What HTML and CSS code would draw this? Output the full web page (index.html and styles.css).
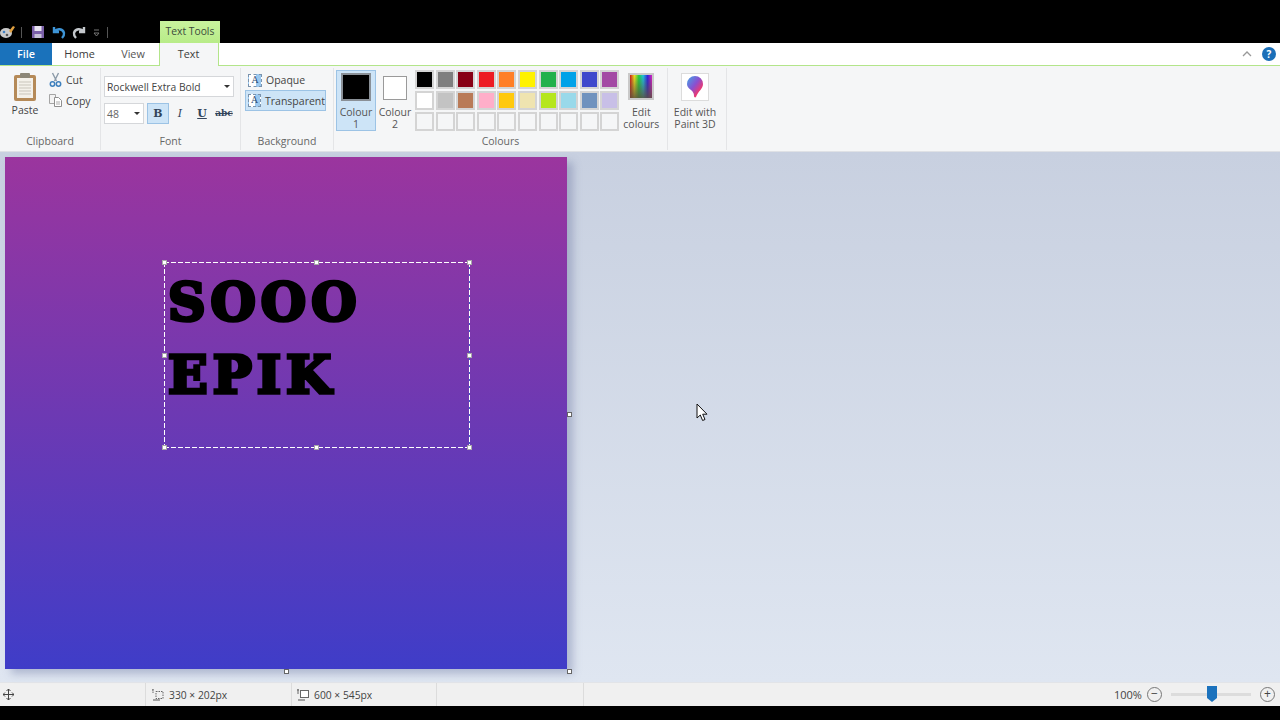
FILE: index.html
```html
<!DOCTYPE html>
<html lang="en">
<head>
    <meta charset="UTF-8">
    <title>Untitled - Paint</title>
    <link rel="stylesheet" href="styles.css">
</head>
<body>

    <div class="titlebar">
        <div class="quick-access">
            <svg class="qa-paint" width="16" height="14" viewBox="0 0 16 14"><ellipse cx="6" cy="8" rx="6" ry="5" fill="#c9c9c9"/><circle cx="4" cy="7" r="1.3" fill="#3f7fc0"/><circle cx="7" cy="10" r="1.3" fill="#555"/><path d="M9 6 13 1l2 1-4 6z" fill="#e0a040"/></svg>
            <span class="qa-sep first"></span>
            <svg class="qa-save" width="14" height="14" viewBox="0 0 14 14"><rect x="1" y="1" width="12" height="12" fill="#7a5fa8"/><rect x="3.500" y="1" width="7" height="5" fill="#e8e4f0"/><rect x="3.500" y="9" width="7" height="4" fill="#c8c2d8"/></svg>
            <svg class="qa-undo" width="14" height="14" viewBox="0 0 14 14"><path d="M2 2v5h5M2.500 6.500C5 3 11 3.500 12 8c.3 2-.5 3.500-2 5" fill="none" stroke="#3d94d6" stroke-width="2.400"/></svg>
            <svg class="qa-redo" width="14" height="14" viewBox="0 0 14 14"><path d="M12 2v5H7M11.500 6.500C9 3 3 3.500 2 8c-.3 2 .5 3.500 2 5" fill="none" stroke="#c4c8cc" stroke-width="2.400"/></svg>
            <svg class="qa-more" width="7" height="8" viewBox="0 0 7 8"><path d="M1 1h5M1 4h5l-2.500 3z" fill="none" stroke="#777" stroke-width="1"/></svg>
            <span class="qa-sep"></span>
        </div>
        <div class="context-tab">Text Tools</div>
    </div>

    <div class="tabs">
        <div class="tab file-tab">File</div>
        <div class="tab home-tab">Home</div>
        <div class="tab view-tab">View</div>
        <div class="tab text-tab">Text</div>
        <div class="tabs-right">
            <svg width="10" height="6" viewBox="0 0 10 6"><path d="M1 5 5 1l4 4" fill="none" stroke="#999" stroke-width="1.300"/></svg>
            <div class="help">?</div>
        </div>
    </div>

    <div class="ribbon">
        <div class="group clipboard">
            <div class="group-body clip-body">
                <div class="paste">
                    <svg width="24" height="30" viewBox="0 0 24 30"><rect x="1" y="3" width="22" height="26" rx="2" fill="#b58a58"/><rect x="4" y="6" width="16" height="20" fill="#f4f1ea"/><path d="M6 10h12M6 13h12M6 16h12M6 19h12M6 22h12" stroke="#c9c5bb"/><rect x="7" y="1" width="10" height="5" rx="1" fill="#8c8778"/></svg>
                    <span>Paste</span>
                </div>
                <div class="clip-list">
                    <div class="clip-item">
                        <svg width="12" height="15" viewBox="0 0 12 15"><path d="M3 1l4 8M9 1 5 9" stroke="#8b9aa8" stroke-width="1.400" fill="none"/><circle cx="3" cy="12" r="2.200" fill="none" stroke="#3f80bd" stroke-width="1.500"/><circle cx="9" cy="12" r="2.200" fill="none" stroke="#3f80bd" stroke-width="1.500"/></svg>
                        <span>Cut</span>
                    </div>
                    <div class="clip-item">
                        <svg width="15" height="15" viewBox="0 0 15 15"><path d="M1.500 1.500h6v9h-6z" fill="#f3f3f3" stroke="#a5a5a5"/><path d="M6.500 4.500h4l3 3v6h-7z" fill="#fff" stroke="#8f8f8f"/><path d="M8 9h4M8 11h4" stroke="#aaa"/></svg>
                        <span>Copy</span>
                    </div>
                </div>
            </div>
            <div class="group-label">Clipboard</div>
        </div>

        <div class="group font">
            <div class="group-body font-body">
                <div class="select font-name">Rockwell Extra Bold<i class="caret"></i></div>
                <div class="font-row">
                    <div class="select font-size">48<i class="caret"></i></div>
                    <div class="fmt fmt-b">B</div>
                    <div class="fmt fmt-i">I</div>
                    <div class="fmt fmt-u">U</div>
                    <div class="fmt fmt-s">abc</div>
                </div>
            </div>
            <div class="group-label">Font</div>
        </div>

        <div class="group background">
            <div class="group-body bg-body">
                <div class="bg-item">
                    <span class="bg-icon">A</span>
                    <span>Opaque</span>
                </div>
                <div class="bg-item selected">
                    <span class="bg-icon">A</span>
                    <span>Transparent</span>
                </div>
            </div>
            <div class="group-label">Background</div>
        </div>

        <div class="group colours">
            <div class="group-body colours-body">
                <div class="colour-btn active">
                    <span class="big-swatch"></span>
                    <span>Colour<br>1</span>
                </div>
                <div class="colour-btn second">
                    <span class="mid-swatch"></span>
                    <span>Colour<br>2</span>
                </div>
                <div class="palette">
                    <span class="swatch c-black"></span>
                    <span class="swatch c-grey"></span>
                    <span class="swatch c-maroon"></span>
                    <span class="swatch c-red"></span>
                    <span class="swatch c-orange"></span>
                    <span class="swatch c-yellow"></span>
                    <span class="swatch c-green"></span>
                    <span class="swatch c-sky"></span>
                    <span class="swatch c-indigo"></span>
                    <span class="swatch c-purple"></span>
                    <span class="swatch c-white"></span>
                    <span class="swatch c-silver"></span>
                    <span class="swatch c-brown"></span>
                    <span class="swatch c-pink"></span>
                    <span class="swatch c-gold"></span>
                    <span class="swatch c-cream"></span>
                    <span class="swatch c-lime"></span>
                    <span class="swatch c-ice"></span>
                    <span class="swatch c-steel"></span>
                    <span class="swatch c-lilac"></span>
                    <span class="swatch"></span>
                    <span class="swatch"></span>
                    <span class="swatch"></span>
                    <span class="swatch"></span>
                    <span class="swatch"></span>
                    <span class="swatch"></span>
                    <span class="swatch"></span>
                    <span class="swatch"></span>
                    <span class="swatch"></span>
                    <span class="swatch"></span>
                </div>
                <div class="edit-colours">
                    <span class="rainbow"></span>
                    <span>Edit<br>colours</span>
                </div>
            </div>
            <div class="group-label">Colours</div>
        </div>

        <div class="group paint3d">
            <div class="p3d-btn">
                <span class="p3d-icon">
                    <svg width="18" height="24" viewBox="0 0 18 24">
                        <defs><linearGradient id="drop" x1="0" y1="0" x2="1" y2="1"><stop offset="0" stop-color="#3fa8e8"/><stop offset=".45" stop-color="#8a4fd0"/><stop offset=".75" stop-color="#f0386e"/><stop offset="1" stop-color="#f6a030"/></linearGradient></defs>
                        <path d="M9 1a8 8 0 0 1 8 8c0 5-5 7-7 13-1 1-2 0-2-1 0-3-1-4-3-6C2 13 1 11 1 9a8 8 0 0 1 8-8z" fill="url(#drop)"/>
                    </svg>
                </span>
                <span>Edit with<br>Paint 3D</span>
            </div>
        </div>
    </div>

    <div class="workspace">
        <div class="canvas">
            <div class="selection">
                <div class="sel-text">SOOO<br>EPIK</div>
                <i class="h h-tl"></i><i class="h h-tc"></i><i class="h h-tr"></i>
                <i class="h h-ml"></i><i class="h h-mr"></i>
                <i class="h h-bl"></i><i class="h h-bc"></i><i class="h h-br"></i>
            </div>
            <i class="h c-right"></i><i class="h c-bottom"></i><i class="h c-corner"></i>
        </div>
        <svg class="cursor" width="12" height="19" viewBox="0 0 12 19"><path d="M1 1v14l3.300-3 2.300 5.500 2.400-1-2.300-5.300H11z" fill="#fff" stroke="#111" stroke-width="1"/></svg>
    </div>

    <div class="statusbar">
        <div class="cell cell-pos">
            <svg width="11" height="11" viewBox="0 0 11 11"><path d="M5.500 0v11M0 5.500h11M3.500 2l2-2 2 2M3.500 9l2 2 2-2M2 3.500l-2 2 2 2M9 3.500l2 2-2 2" fill="none" stroke="#444"/></svg>
        </div>
        <div class="cell cell-sel">
            <svg width="12" height="12" viewBox="0 0 12 12"><path d="M1 0v5M0 1h2M4 2.500h7v7H4z" fill="none" stroke="#666" stroke-dasharray="1.500 1"/><path d="M1 11h7" stroke="#555"/></svg>
            <span>330 × 202px</span>
        </div>
        <div class="cell cell-size">
            <svg width="12" height="12" viewBox="0 0 12 12"><path d="M1 0v5M0 1h2" fill="none" stroke="#666"/><rect x="3.500" y="1.500" width="8" height="7" fill="#fff" stroke="#666"/><path d="M1 11h7" stroke="#555"/></svg>
            <span>600 × 545px</span>
        </div>
        <div class="cell cell-empty"></div>
        <div class="cell-zoom">
            <span class="zoom-pct">100%</span>
            <span class="zoom-btn">−</span>
            <div class="slider"><i class="thumb"></i></div>
            <span class="zoom-btn">+</span>
        </div>
    </div>

    <div class="bottom-strip"></div>

</body>
</html>
```

FILE: styles.css
```css
* {
    margin: 0;
    padding: 0;
    box-sizing: border-box;
}

body {
    width: 1280px;
    height: 720px;
    overflow: hidden;
    display: flex;
    flex-direction: column;
    background: #000;
    font-family: "Open Sans", "Noto Sans", sans-serif;
    font-size: 10.500px;
    color: #444;
}

/* title bar */
.titlebar {
    height: 43px;
    background: #000;
    display: flex;
    align-items: flex-end;
}

.quick-access {
    width: 160px;
    height: 43px;
    padding: 25px 0 0 0;
    display: flex;
    align-items: flex-start;
}

.qa-paint { margin-right: 5px; }
.qa-sep { width: 1px; height: 11px; margin-top: 2px; background: #555; }
.qa-sep.first { margin-right: 9px; }
.qa-save { margin-right: 7px; }
.qa-undo { margin-right: 6px; }
.qa-redo { margin-right: 7px; }
.qa-more { margin: 4px 7px 0 0; }

.context-tab {
    width: 60px;
    height: 22px;
    background: linear-gradient(#c8f29e, #b8ec88);
    color: #3a4a3a;
    font-size: 10.300px;
    text-align: center;
    line-height: 21px;
}

/* tabs */
.tabs {
    height: 23px;
    background: #fff;
    border-bottom: 1px solid #b3e58a;
    display: flex;
    font-size: 10.800px;
}

.tab {
    height: 22px;
    line-height: 22px;
    text-align: center;
    color: #3c3c3c;
}

.file-tab { width: 52px; background: #1a72bb; color: #fff; font-weight: 600; }
.home-tab { width: 55px; }
.view-tab { width: 52px; color: #555; }

.text-tab {
    width: 60px;
    height: 23px;
    background: #f5f6f7;
    border: 1px solid #b3e58a;
    border-top: none;
    border-bottom: none;
    padding-right: 1px;
}

.tabs-right {
    margin-left: auto;
    padding-right: 4px;
    display: flex;
    align-items: center;
    gap: 10px;
}

.help {
    width: 14px;
    height: 14px;
    border-radius: 50%;
    background: #1b6fb8;
    color: #fff;
    font-size: 10px;
    font-weight: 700;
    line-height: 14px;
    text-align: center;
}

/* ribbon */
.ribbon {
    height: 86px;
    background: #f5f6f7;
    border-bottom: 1px solid #dfe1e5;
    display: flex;
}

.group {
    display: flex;
    flex-direction: column;
    border-right: 1px solid #e4e5e7;
    height: 82px;
    margin-top: 2px;
}

.group-body { flex: 1; }

.group-label {
    height: 17px;
    text-align: center;
    color: #666;
    line-height: 17px;
}

.clipboard { width: 101px; }
.font { width: 140px; }
.background { width: 93px; }
.colours { width: 334px; }
.paint3d { width: 59px; padding-right: 4px; }

.clip-body { display: flex; }

.paste {
    width: 48px;
    display: flex;
    flex-direction: column;
    align-items: center;
    padding-top: 4px;
    padding-left: 2px;
    gap: 1px;
}

.clip-list {
    display: flex;
    flex-direction: column;
    gap: 6px;
    padding-top: 4px;
}

.clip-item {
    display: flex;
    align-items: center;
    height: 15px;
    gap: 3px;
}

.clip-item svg { width: 15px; flex-shrink: 0; }

.font-body { padding: 8px 0 0 3px; }

.select {
    background: #fff;
    border: 1px solid #d5d7da;
    display: flex;
    align-items: center;
    justify-content: space-between;
    padding: 0 3px 0 2px;
    color: #444;
}

.font-name { width: 130px; height: 21px; font-size: 10.300px; }

.caret {
    width: 0;
    height: 0;
    border: 3px solid transparent;
    border-top: 3px solid #333;
    border-bottom: none;
}

.font-row {
    display: flex;
    align-items: center;
    margin-top: 6px;
}

.font-size { width: 40px; height: 21px; margin-right: 3px; color: #666; }

.fmt {
    width: 22px;
    height: 21px;
    text-align: center;
    line-height: 21px;
    font-family: "DejaVu Serif", serif;
    font-size: 11px;
    color: #33445a;
}

.fmt-b { background: #cde4f7; border: 1px solid #9cc3e5; font-weight: 700; line-height: 19px; }
.fmt-i { font-style: italic; }
.fmt-u { text-decoration: underline; font-weight: 700; }
.fmt-s { text-decoration: line-through; font-size: 9px; font-weight: 700; }

.bg-body {
    padding: 2px 0 0 4px;
    display: flex;
    flex-direction: column;
}

.bg-item {
    width: 81px;
    height: 20px;
    display: flex;
    align-items: center;
    gap: 4px;
    padding-left: 2px;
    border: 1px solid transparent;
}

.bg-item.selected { height: 21px; background: #cde4f7; border-color: #9cc3e5; }

.bg-icon {
    width: 14px;
    height: 13px;
    border: 1px dashed #7a93ad;
    font-family: "DejaVu Serif", serif;
    font-size: 9px;
    line-height: 11px;
    text-align: center;
    color: #2c4a70;
    background: linear-gradient(90deg, #fff 55%, #9cc8ee 55%);
}

.colours-body {
    display: flex;
    padding: 2px 0 0 2px;
}

.colour-btn {
    width: 40px;
    height: 61px;
    display: flex;
    flex-direction: column;
    align-items: center;
    text-align: center;
    line-height: 12px;
    border: 1px solid transparent;
    color: #555;
}

.colour-btn.active { background: #cde4f7; border-color: #9cc3e5; padding-top: 2px; }

.big-swatch {
    width: 30px;
    height: 30px;
    border: 2px solid #8a9097;
    background: #000;
    margin-bottom: 5px;
}

.colour-btn.second { margin-left: -1px; padding-top: 5px; }

.mid-swatch {
    width: 24px;
    height: 24px;
    background: #fff;
    border: 1px solid #9a9a9a;
    margin-bottom: 6px;
}

.palette {
    display: grid;
    grid-template-columns: repeat(10, 19px);
    grid-auto-rows: 19px;
    column-gap: 1.600px;
    row-gap: 2px;
}

.swatch {
    border: 2px solid #d4d4d4;
    background: #f5f6f7;
}

.c-black { background: #000; }
.c-grey { background: #7f7f7f; }
.c-maroon { background: #880015; }
.c-red { background: #ed1c24; }
.c-orange { background: #ff7f27; }
.c-yellow { background: #fff200; }
.c-green { background: #22b14c; }
.c-sky { background: #00a2e8; }
.c-indigo { background: #3f48cc; }
.c-purple { background: #a349a4; }
.c-white { background: #fff; }
.c-silver { background: #c3c3c3; }
.c-brown { background: #b97a57; }
.c-pink { background: #ffaec9; }
.c-gold { background: #ffc90e; }
.c-cream { background: #efe4b0; }
.c-lime { background: #b5e61d; }
.c-ice { background: #99d9ea; }
.c-steel { background: #7092be; }
.c-lilac { background: #c8bfe7; }

.edit-colours {
    width: 44px;
    margin-left: 0;
    display: flex;
    flex-direction: column;
    align-items: center;
    text-align: center;
    line-height: 12px;
    padding-top: 3px;
    color: #555;
}

.rainbow {
    width: 26px;
    height: 27px;
    margin-bottom: 6px;
    border: 2px solid #c9c9c9;
    background:
        linear-gradient(rgba(255, 255, 255, 0), rgba(90, 80, 60, 0.85)),
        linear-gradient(90deg, #d01818, #f0e020, #20d040, #20c0e0, #3020e0, #e020c0);
}

.p3d-btn {
    display: flex;
    flex-direction: column;
    align-items: center;
    text-align: center;
    line-height: 12px;
    padding-top: 5px;
    color: #555;
}

.p3d-icon {
    width: 28px;
    height: 28px;
    margin-bottom: 5px;
    background: #fff;
    border: 1px solid #dcdcdc;
    display: flex;
    justify-content: center;
    align-items: center;
}

/* workspace */
.workspace {
    position: relative;
    height: 530px;
    padding: 5px 0 0 5px;
    background: linear-gradient(#c8d0e0, #dfe6f1);
}

.canvas {
    position: relative;
    width: 562px;
    height: 512px;
    background: linear-gradient(#9b359e, #3f3dc8);
    box-shadow: 6px 5px 8px rgba(90, 100, 150, 0.35);
}

/* long white dashes, a faint blue line under the right edge */
.selection {
    position: absolute;
    left: 159px;
    top: 105px;
    width: 306px;
    height: 186px;
    background:
        linear-gradient(90deg, #fff 5px, transparent 5px) 0 0 / 7px 1px repeat-x,
        linear-gradient(90deg, #fff 5px, transparent 5px) 0 100% / 7px 1px repeat-x,
        linear-gradient(#fff 5px, transparent 5px) 0 0 / 1px 7px repeat-y,
        linear-gradient(#fff 5px, transparent 5px) 100% 0 / 1px 7px repeat-y,
        linear-gradient(#3f5fc8, #3f5fc8) 100% 0 / 1px 100% no-repeat;
}

.sel-text {
    padding: 3px 0 0 4px;
    font-family: "DejaVu Serif", serif;
    font-weight: 700;
    font-size: 52px;
    line-height: 73px;
    letter-spacing: 5px;
    color: #000;
    -webkit-text-stroke: 3.500px #000;
}

.h {
    position: absolute;
    width: 5px;
    height: 5px;
    background: #fff;
    border: 1px solid #a8a8a8;
}

.h-tl { left: -2px; top: -2px; }
.h-tc { left: 150px; top: -2px; }
.h-tr { right: -2px; top: -2px; }
.h-ml { left: -2px; top: 91px; }
.h-mr { right: -2px; top: 91px; }
.h-bl { left: -2px; bottom: -2px; }
.h-bc { left: 150px; bottom: -2px; }
.h-br { right: -2px; bottom: -2px; }

.c-right { left: 562px; top: 255px; border-color: #666; }
.c-bottom { left: 279px; top: 512px; border-color: #666; }
.c-corner { left: 562px; top: 512px; border-color: #666; }

.cursor {
    position: absolute;
    left: 696px;
    top: 251px;
}

/* status bar */
.statusbar {
    height: 24px;
    background: #f0f0f0;
    border-top: 1px solid #e2e4e8;
    display: flex;
    color: #444;
    font-size: 10.300px;
}

.cell {
    height: 23px;
    border-right: 1px solid #dcdcdc;
    display: flex;
    align-items: center;
    gap: 5px;
}

.cell-pos { width: 146px; padding-left: 3px; }
.cell-sel { width: 146px; padding-left: 6px; }
.cell-size { width: 145px; padding-left: 5px; }
.cell-empty { width: 147px; }

.cell-zoom {
    flex: 1;
    display: flex;
    align-items: center;
    padding-left: 530px;
}

.zoom-pct { width: 33px; font-size: 11px; }

.zoom-btn {
    width: 15px;
    height: 15px;
    border: 1px solid #777;
    border-radius: 50%;
    font-size: 12px;
    line-height: 12px;
    text-align: center;
    color: #444;
}

.slider {
    position: relative;
    width: 80px;
    height: 3px;
    margin: 0 9px;
    background: #dcdcdc;
}

.thumb {
    position: absolute;
    left: 36px;
    top: -7px;
    width: 10px;
    height: 16px;
    background: #1b72bd;
    clip-path: polygon(0 0, 100% 0, 100% 75%, 50% 100%, 0 75%);
}

.bottom-strip {
    flex: 1;
    background: #000;
}
```
